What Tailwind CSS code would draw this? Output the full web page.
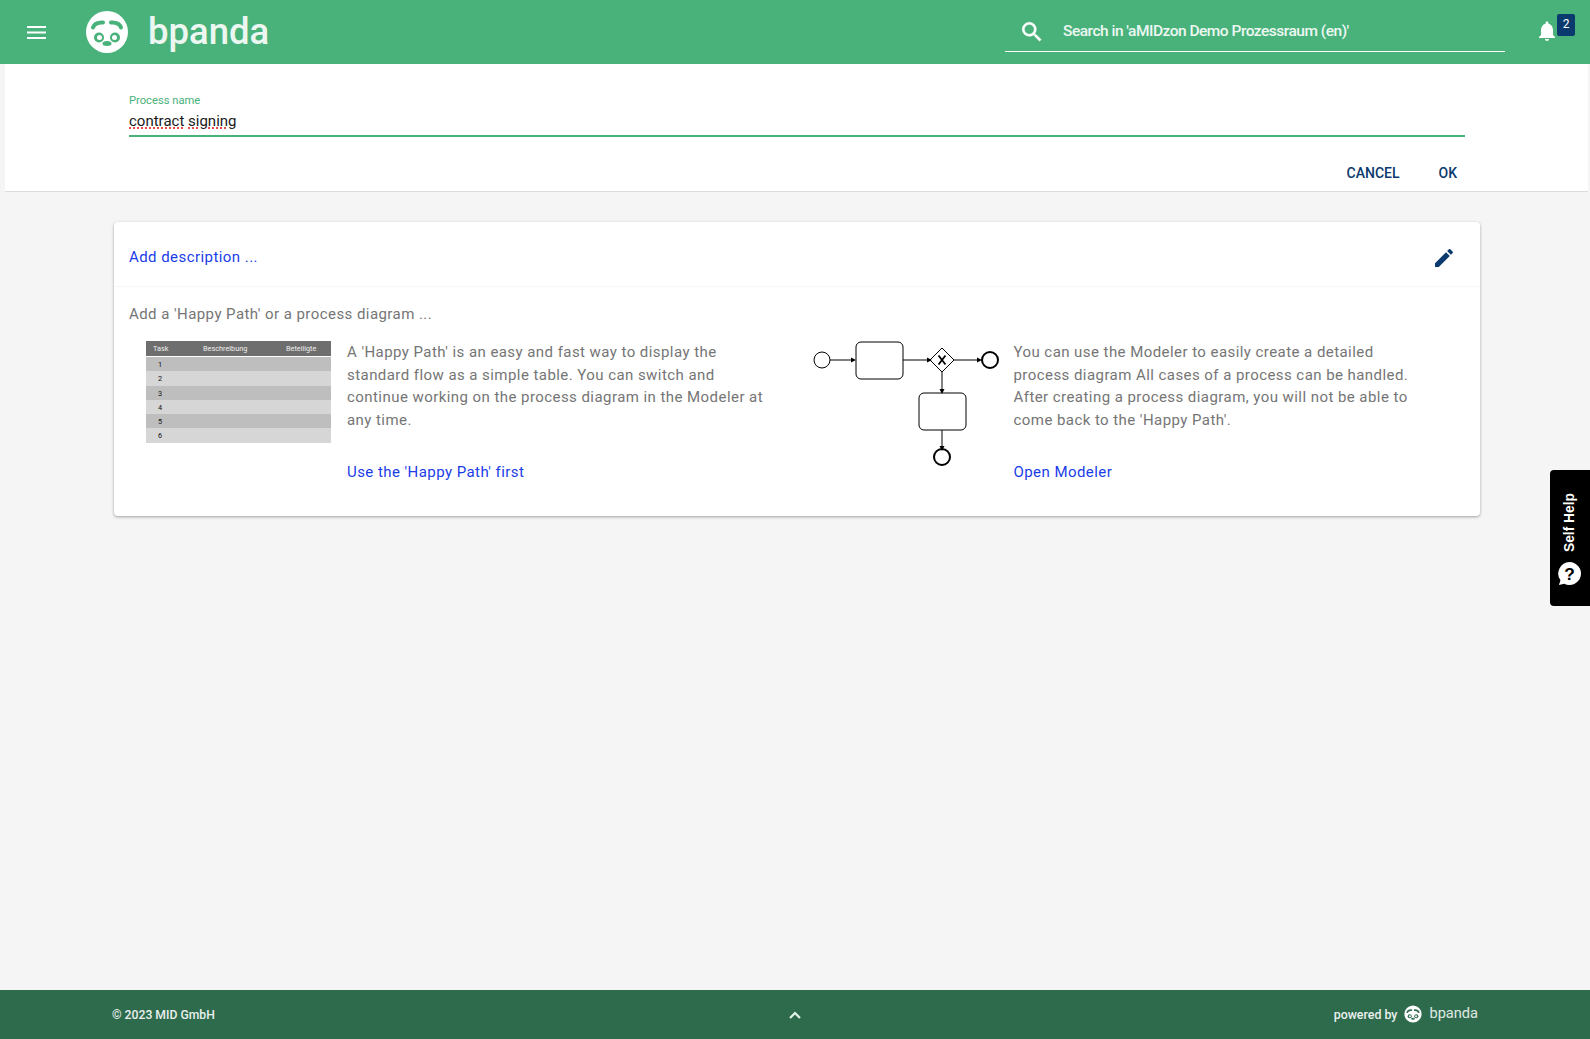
<!DOCTYPE html>
<html lang="en">
<head>
  <meta charset="UTF-8" />
  <title>bpanda</title>
  <script src="https://cdn.jsdelivr.net/npm/@tailwindcss/browser@4"></script>
</head>
<body class="bg-[#f5f5f5] font-['Roboto',sans-serif] text-[#757575] h-[1039px] w-[1590px] overflow-hidden flex flex-col relative">

  <!-- header -->
  <header class="h-16 shrink-0 bg-[#49b27b] text-white flex items-center relative z-10">
    <svg class="ml-[27px] w-[19px] h-[13px]" viewBox="0 0 19 13" fill="#fff"><rect y="0" width="19" height="2"/><rect y="5.5" width="19" height="2"/><rect y="11" width="19" height="2"/></svg>
    <svg class="ml-[39px] w-[44px] h-[44px]" viewBox="0 0 44 44">
      <circle cx="22" cy="22" r="21" fill="#fff"/>
      <path d="M8 17.500Q10 12 18 12.500M36 17.500Q34 12 26 12.500" fill="none" stroke="#49b27b" stroke-width="4" stroke-linecap="round"/>
      <circle cx="14" cy="27.500" r="5" fill="#49b27b"/>
      <circle cx="30" cy="27.500" r="5" fill="#49b27b"/>
      <circle cx="14.500" cy="27.500" r="2.500" fill="#fff"/>
      <circle cx="29.500" cy="27.500" r="2.500" fill="#fff"/>
      <ellipse cx="22" cy="33.500" rx="4.500" ry="2.500" fill="#49b27b"/>
    </svg>
    <span class="ml-[19px] text-[36.500px] leading-none font-medium font-['Roboto',sans-serif] text-white/90">bpanda</span>

    <div class="ml-auto w-[500px] h-[52px] border-b border-white flex items-center -mt-3 pt-3">
      <svg class="ml-[14px] w-[26px] h-[26px]" viewBox="0 0 24 24" fill="#fff" stroke="#fff" stroke-width="0.4"><path d="M15.500 14h-.79l-.28-.27A6.470 6.470 0 0 0 16 9.500 6.500 6.500 0 1 0 9.500 16c1.610 0 3.090-.59 4.230-1.570l.27.28v.79l5 4.990L20.490 19l-4.990-5zm-6 0C7.010 14 5 11.990 5 9.500S7.010 5 9.500 5 14 7.010 14 9.500 11.990 14 9.500 14z"/></svg>
      <span class="ml-[18px] text-[15.500px] font-medium tracking-[-0.5px] text-white/90">Search in 'aMIDzon Demo Prozessraum (en)'</span>
    </div>

    <div class="ml-[30px] mr-[31px] relative w-6 h-6 -mt-0.5">
      <svg class="w-6 h-6" viewBox="0 0 24 24" fill="#fff"><path d="M12 22c1.100 0 2-.9 2-2h-4c0 1.100.9 2 2 2zm6-6v-5c0-3.070-1.630-5.640-4.500-6.320V4c0-.83-.67-1.500-1.500-1.500s-1.500.67-1.500 1.500v.68C7.640 5.360 6 7.920 6 11v5l-2 2v1h16v-1l-2-2z"/></svg>
      <span class="absolute left-[22px] -top-[5px] w-[18px] h-[22px] bg-[#0b3a6e] rounded-[2px] text-[12px] text-center leading-[20px] text-white">2</span>
    </div>
  </header>

  <!-- process name panel -->
  <section class="ml-[5px] mr-0.5 h-[128px] shrink-0 bg-white border-b border-[#dcdcdc] pl-[124px] pr-[123px] pt-[30px]">
    <div class="text-[11.200px] leading-[14px] text-[#49b27b]">Process name</div>
    <div class="mt-[3px] h-[24px] text-[15px] leading-[20px] text-[#1a1a1a]">
      <span class="underline decoration-dotted decoration-[#e01010] underline-offset-2">contract</span> <span class="underline decoration-dotted decoration-[#e01010] underline-offset-2">signing</span>
    </div>
    <div class="h-0.5 bg-[#49b27b]"></div>
    <div class="flex justify-end mt-[26px] text-[14px] font-medium text-[#0b3a6e] leading-[20px] pr-2">
      <span>CANCEL</span>
      <span class="ml-[39px]">OK</span>
    </div>
  </section>

  <main class="flex-1 min-h-0 pl-[114px] pr-[110px] pt-[30px]">
    <div class="bg-white rounded-[4px] shadow-[0_1px_3px_rgba(0,0,0,0.35)] h-[294px]">
      <div class="h-[65px] border-b border-[#f7f7f7] pl-[15px] pr-[24px] pt-[7px] flex items-center justify-between">
        <a class="text-[15px] tracking-[0.44px] text-[#1a3de8]">Add description ...</a>
        <svg class="w-6 h-6" viewBox="0 0 24 24" fill="#0b3a6e"><path d="M3 17.250V21h3.750L17.810 9.940l-3.750-3.750L3 17.250zM20.710 7.040a1 1 0 0 0 0-1.410l-2.340-2.340a1 1 0 0 0-1.410 0l-1.830 1.830 3.750 3.750 1.830-1.830z"/></svg>
      </div>

      <p class="ml-[15px] mt-[16px] text-[15px] leading-[22px] tracking-[0.44px]">Add a 'Happy Path' or a process diagram ...</p>

      <div class="flex mt-[15px]">
        <!-- happy path thumbnail -->
        <div class="ml-8 mt-[1px] w-[185px] h-[102px] shrink-0 text-[7.300px] text-[#111]">
          <div class="h-[14.500px] bg-[#6e6e6e] text-[#eee] grid grid-cols-[50px_83px_1fr] leading-[15px] pl-[7px]">
            <span>Task</span><span>Beschreibung</span><span>Beteiligte</span>
          </div>
          <div class="h-[14.250px] mt-[1.500px] bg-[#bebebe] pl-[12px] leading-[15px]">1</div>
          <div class="h-[14.250px] bg-[#d6d6d6] pl-[12px] leading-[15px]">2</div>
          <div class="h-[14.250px] bg-[#bebebe] pl-[12px] leading-[15px]">3</div>
          <div class="h-[14.250px] bg-[#d6d6d6] pl-[12px] leading-[15px]">4</div>
          <div class="h-[14.250px] bg-[#bebebe] pl-[12px] leading-[15px]">5</div>
          <div class="h-[14.250px] bg-[#d6d6d6] pl-[12px] leading-[15px]">6</div>
        </div>

        <div class="ml-4 w-[425px] shrink-0 text-[15px] tracking-[0.44px] leading-[22.500px] pt-px">
          <p>A 'Happy Path' is an easy and fast way to display the standard flow as a simple table. You can switch and continue working on the process diagram in the Modeler at any time.</p>
          <a class="block mt-[30px] text-[#1a3de8]">Use the 'Happy Path' first</a>
        </div>

        <!-- modeler diagram -->
        <svg class="ml-[41px] mt-px w-[190px] h-[132px] shrink-0" viewBox="0 0 190 132" fill="none" stroke="#000">
          <circle cx="9" cy="19" r="8" stroke-width="1"/>
          <rect x="43" y="1" width="47" height="37" rx="5" stroke-width="1"/>
          <path d="M17 19h24M90 19h27M141 19h26M129 31v20M129 89v19" stroke-width="1"/>
          <path d="M43 19l-5-2.500v5zM119 19l-5-2.500v5zM169 19l-5-2.500v5zM129 53l-2.500-5h5zM129 110l-2.500-5h5z" fill="#000" stroke="none"/>
          <path d="M129 7l12 12-12 12-12-12z" stroke-width="1"/>
          <path d="M125.500 14.500l7 9M132.500 14.500l-7 9" stroke-width="1.800"/>
          <circle cx="177" cy="19" r="8" stroke-width="2"/>
          <rect x="106" y="52" width="47" height="37" rx="5" stroke-width="1"/>
          <circle cx="129" cy="116" r="8" stroke-width="2"/>
        </svg>

        <div class="ml-[10.500px] w-[400px] shrink-0 text-[15px] tracking-[0.44px] leading-[22.500px] pt-px">
          <p>You can use the Modeler to easily create a detailed process diagram All cases of a process can be handled. After creating a process diagram, you will not be able to come back to the 'Happy Path'.</p>
          <a class="block mt-[30px] text-[#1a3de8]">Open Modeler</a>
        </div>
      </div>
    </div>
  </main>

  <footer class="h-[49px] shrink-0 bg-[#2d6b4c] text-white grid grid-cols-3 items-center pl-[112px] pr-[112px] text-[12.200px]">
    <span class="font-medium text-white/90 mt-0.5">© 2023 MID GmbH</span>
    <svg class="justify-self-center w-6 h-6 text-[#e6f0ea]" viewBox="0 0 24 24" fill="none" stroke="currentColor" stroke-width="2.200"><path d="M7 15l5-5 5 5"/></svg>
    <div class="justify-self-end flex items-center">
      <span class="font-medium mt-0.5 text-[12.400px] text-white/90">powered by</span>
      <svg class="ml-[7px] w-[18px] h-[18px]" viewBox="0 0 44 44">
        <circle cx="22" cy="22" r="21" fill="#fff"/>
        <path d="M8 17.500Q10 12 18 12.500M36 17.500Q34 12 26 12.500" fill="none" stroke="#2d6b4c" stroke-width="4" stroke-linecap="round"/>
        <circle cx="14" cy="27.500" r="5" fill="#2d6b4c"/>
        <circle cx="30" cy="27.500" r="5" fill="#2d6b4c"/>
        <circle cx="14.500" cy="27.500" r="2.500" fill="#fff"/>
        <circle cx="29.500" cy="27.500" r="2.500" fill="#fff"/>
        <ellipse cx="22" cy="33.500" rx="4.500" ry="2.500" fill="#2d6b4c"/>
      </svg>
      <span class="ml-[7px] text-[14.600px] text-white/85 -mt-0.5">bpanda</span>
    </div>
  </footer>

  <!-- self help tab, sits over the page edge -->
  <div class="absolute right-0 top-[470px] w-10 h-[136px] bg-black rounded-l-[4px] text-white flex flex-col items-center justify-end pb-5">
    <span class="[writing-mode:vertical-rl] rotate-180 text-[13.800px] font-['Liberation_Sans',sans-serif] font-bold leading-none mb-[9px]">Self Help</span>
    <svg class="w-[25px] h-[25px] -ml-px" viewBox="0 0 26 26"><path d="M13 1a12 12 0 1 1-5.500 22.700L2 25l1.600-5A12 12 0 0 1 13 1z" fill="#fff"/><text x="13" y="19.500" text-anchor="middle" font-size="18" font-weight="700" font-family="Liberation Sans" fill="#000">?</text></svg>
  </div>
</body>
</html>
